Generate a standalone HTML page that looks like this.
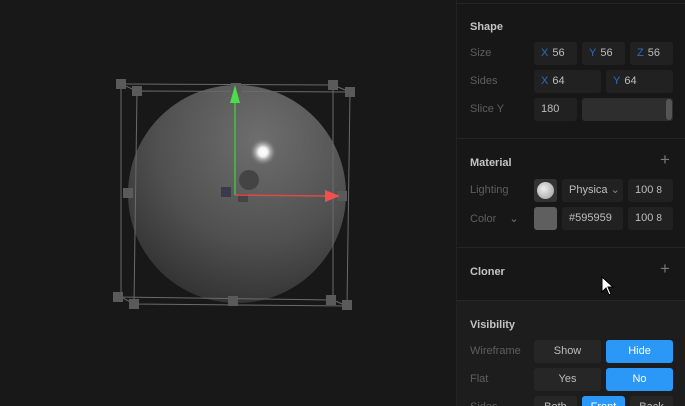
<!DOCTYPE html>
<html><head><style>
*{margin:0;padding:0;box-sizing:border-box}
html,body{width:685px;height:406px;overflow:hidden}
body{background:#181818;font-family:"Liberation Sans",sans-serif;position:relative}
#vp{position:absolute;left:0;top:0;width:456px;height:406px;background:#181818}
#pn{position:absolute;left:456px;top:0;width:229px;height:406px;background:#171717;border-left:1px solid #222;overflow:hidden}
.a{position:absolute}
.t{position:absolute;left:13px;font-size:11px;font-weight:bold;color:#c4c4c4}
.l{position:absolute;left:13px;font-size:11px;color:#5e5e5e}
.i{position:absolute;height:23px;background:#212121;border-radius:3px;font-size:11px;color:#bdbdbd;line-height:23px;padding-left:7px;overflow:hidden;white-space:nowrap}
.i b{font-weight:normal;color:#2c6bc0;margin-right:4px}
.bt{text-align:center;padding:0}
.on{background:#2b98f8;color:#fff}
.sep{position:absolute;left:0;width:229px;height:1px;background:#242424}
.pl{position:absolute;left:203px;font-size:17px;color:#777;font-weight:300}
</style></head><body>
<div id="vp">
<svg width="456" height="406" style="position:absolute;left:0;top:0">
<defs>
<radialGradient id="g" cx="0.6" cy="0.25" r="0.85">
<stop offset="0" stop-color="#6e6e6e"/><stop offset="0.55" stop-color="#505050"/><stop offset="1" stop-color="#2c2c2c"/>
</radialGradient>
<radialGradient id="h" cx="0.5" cy="0.5" r="0.5">
<stop offset="0" stop-color="#fff"/><stop offset="0.35" stop-color="#f4f4f4"/><stop offset="1" stop-color="#888" stop-opacity="0"/>
</radialGradient>
</defs>
<circle cx="237" cy="194" r="109" fill="url(#g)"/>
<circle cx="263" cy="152" r="13" fill="url(#h)"/>
<circle cx="249" cy="180" r="10" fill="#444"/>
<g fill="none" stroke="#6a6a6a" stroke-width="1">
<polyline points="121,84 333,85 333,300 121,297 121,84"/>
<polyline points="137,91 350,92 347,306 134,304 137,91"/>
<line x1="121" y1="84" x2="137" y2="91"/><line x1="333" y1="85" x2="350" y2="92"/>
<line x1="121" y1="297" x2="134" y2="304"/><line x1="347" y1="306" x2="333" y2="300"/>
</g>
<g fill="#5a5a5a">
<rect x="116" y="79" width="10" height="10"/><rect x="132" y="86" width="10" height="10"/>
<rect x="328" y="80" width="10" height="10"/><rect x="345" y="87" width="10" height="10"/>
<rect x="113" y="292" width="10" height="10"/><rect x="129" y="299" width="10" height="10"/>
<rect x="326" y="295" width="10" height="10"/><rect x="342" y="300" width="10" height="10"/>
<rect x="231" y="83" width="10" height="10"/><rect x="228" y="296" width="10" height="10"/>
<rect x="123" y="188" width="10" height="10"/><rect x="337" y="191" width="10" height="10"/>
<rect x="221" y="187" width="10" height="10" fill="#3a3a4a"/><rect x="238" y="194" width="10" height="8" fill="#444"/>
</g>
<line x1="235" y1="195" x2="235" y2="100" stroke="#3ec43e" stroke-width="1.5"/>
<polygon points="235,85 230,103 240,103" fill="#4cdc4c"/>
<line x1="235" y1="195" x2="325" y2="196" stroke="#e04848" stroke-width="1.5"/>
<polygon points="340,196 325,190 325,202" fill="#f05050"/>
</svg>
</div>
<div id="pn">
<div class="sep" style="top:3px"></div>
<div class="t" style="top:21px">Shape</div>
<div class="l" style="top:47px">Size</div>
<div class="i" style="left:77px;top:42px;width:43px"><b>X</b>56</div>
<div class="i" style="left:125px;top:42px;width:43px"><b>Y</b>56</div>
<div class="i" style="left:173px;top:42px;width:43px"><b>Z</b>56</div>
<div class="l" style="top:75px">Sides</div>
<div class="i" style="left:77px;top:70px;width:67px"><b>X</b>64</div>
<div class="i" style="left:149px;top:70px;width:67px"><b>Y</b>64</div>
<div class="l" style="top:103px">Slice Y</div>
<div class="i" style="left:77px;top:98px;width:43px">180</div>
<div class="i" style="left:125px;top:98px;width:91px;background:#2e2e2e"><div class="a" style="right:1px;top:1px;width:6px;height:21px;background:#555;border-radius:3px"></div></div>
<div class="sep" style="top:138px"></div>
<div class="t" style="top:157px">Material</div><div class="pl" style="top:150px">+</div>
<div class="l" style="top:184px">Lighting</div>
<div class="i" style="left:77px;top:179px;width:23px;padding:0;background:#333"><div class="a" style="left:3px;top:3px;width:17px;height:17px;border-radius:50%;background:radial-gradient(circle at 40% 40%,#eee,#999)"></div></div>
<div class="i" style="left:105px;top:179px;width:61px">Physica <span style="color:#888">⌄</span></div>
<div class="i" style="left:171px;top:179px;width:45px">100 <span style="font-size:10px">8</span></div>
<div class="l" style="top:212px">Color <span style="margin-left:10px;color:#777">⌄</span></div>
<div class="i" style="left:77px;top:207px;width:23px;background:#5f5f5f"></div>
<div class="i" style="left:105px;top:207px;width:61px">#595959</div>
<div class="i" style="left:171px;top:207px;width:45px">100 <span style="font-size:10px">8</span></div>
<div class="sep" style="top:247px"></div>
<div class="t" style="top:266px">Cloner</div><div class="pl" style="top:259px">+</div>
<svg class="a" style="left:144px;top:276px" width="14" height="20"><polygon points="1,1 1,16 5,12 8,19 10,18 7,11 12,11" fill="#fff" stroke="#000" stroke-width="1"/></svg>
<div class="a" style="left:0;top:300px;width:229px;height:106px;background:#1d1d1d;border-top:1px solid #262626"></div>
<div class="t" style="top:319px">Visibility</div>
<div class="l" style="top:345px">Wireframe</div>
<div class="i bt" style="left:77px;top:340px;width:67px;background:#262626">Show</div>
<div class="i bt on" style="left:149px;top:340px;width:67px">Hide</div>
<div class="l" style="top:373px">Flat</div>
<div class="i bt" style="left:77px;top:368px;width:67px;background:#262626">Yes</div>
<div class="i bt on" style="left:149px;top:368px;width:67px">No</div>
<div class="l" style="top:401px">Sides</div>
<div class="i bt" style="left:77px;top:396px;width:43px;background:#262626">Both</div>
<div class="i bt on" style="left:125px;top:396px;width:43px">Front</div>
<div class="i bt" style="left:173px;top:396px;width:43px;background:#262626">Back</div>
</div>
</body></html>
